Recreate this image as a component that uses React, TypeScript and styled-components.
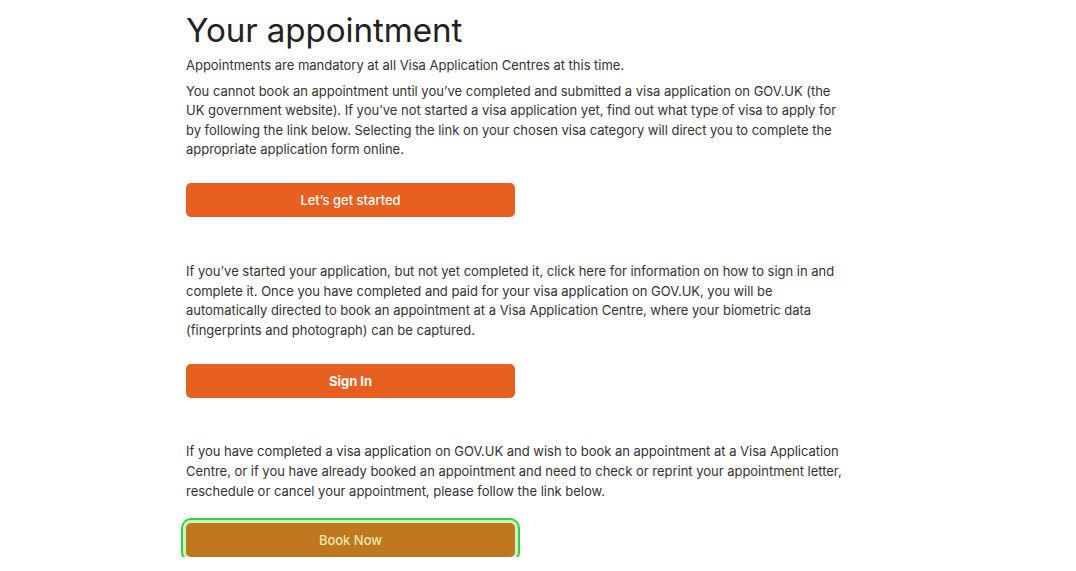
import React from "react";
import styled, { createGlobalStyle } from "styled-components";

const Global = createGlobalStyle`
  html, body { margin: 0; padding: 0; background: #fff; }
  body { font-family: Inter, "Noto Sans", sans-serif; }
`;

const Page = styled.main`
  padding: 8px 0 0 186px;
  width: 663px;
`;

const Title = styled.h1`
  margin: 0;
  font-size: 33.2px;
  font-weight: 400;
  color: #222;
  line-height: 44px;
  letter-spacing: -0.1px;
`;

const Para = styled.p<{ $top: number }>`
  margin: ${(p) => p.$top}px 0 0;
  font-size: 13px;
  line-height: 19.6px;
  letter-spacing: -0.02px;
  color: #333;
`;

const Button = styled.button<{ $top: number; $bold?: boolean; $focus?: boolean }>`
  display: block;
  margin-top: ${(p) => p.$top}px;
  width: 329px;
  height: 34px;
  border: none;
  border-radius: 5px;
  font-family: Inter, "Noto Sans", sans-serif;
  font-size: 13px;
  font-weight: ${(p) => (p.$bold ? 700 : 500)};
  color: ${(p) => (p.$focus ? "#eee6b4" : "#fff")};
  background: ${(p) => (p.$focus ? "#bf781e" : "#e8601f")};
  box-shadow: ${(p) =>
    p.$focus ? "0 0 0 3px #cdf3c6, 0 0 0 5px #2bd82b" : "none"};
  cursor: pointer;
`;

export default function App() {
  return (
    <>
      <Global />
      <Page>
        <Title>Your appointment</Title>
        <Para $top={4}>
          Appointments are mandatory at all Visa Application Centres at this time.
        </Para>
        <Para $top={6}>
          You cannot book an appointment until you’ve completed and submitted a visa
          application on GOV.UK (the UK government website). If you’ve not started a
          visa application yet, find out what type of visa to apply for by following
          the link below. Selecting the link on your chosen visa category will direct
          you to complete the appropriate application form online.
        </Para>
        <Button $top={23}>Let’s get started</Button>
        <Para $top={45}>
          If you’ve started your application, but not yet completed it, click here for
          information on how to sign in and complete it. Once you have completed and
          paid for your visa application on GOV.UK, you will be automatically directed
          to book an appointment at a Visa Application Centre, where your biometric
          data (fingerprints and photograph) can be captured.
        </Para>
        <Button $top={24} $bold>
          Sign In
        </Button>
        <Para $top={44}>
          If you have completed a visa application on GOV.UK and wish to book an
          appointment at a Visa Application Centre, or if you have already booked an
          appointment and need to check or reprint your appointment letter, reschedule
          or cancel your appointment, please follow the link below.
        </Para>
        <Button $top={22} $focus>
          Book Now
        </Button>
      </Page>
    </>
  );
}
